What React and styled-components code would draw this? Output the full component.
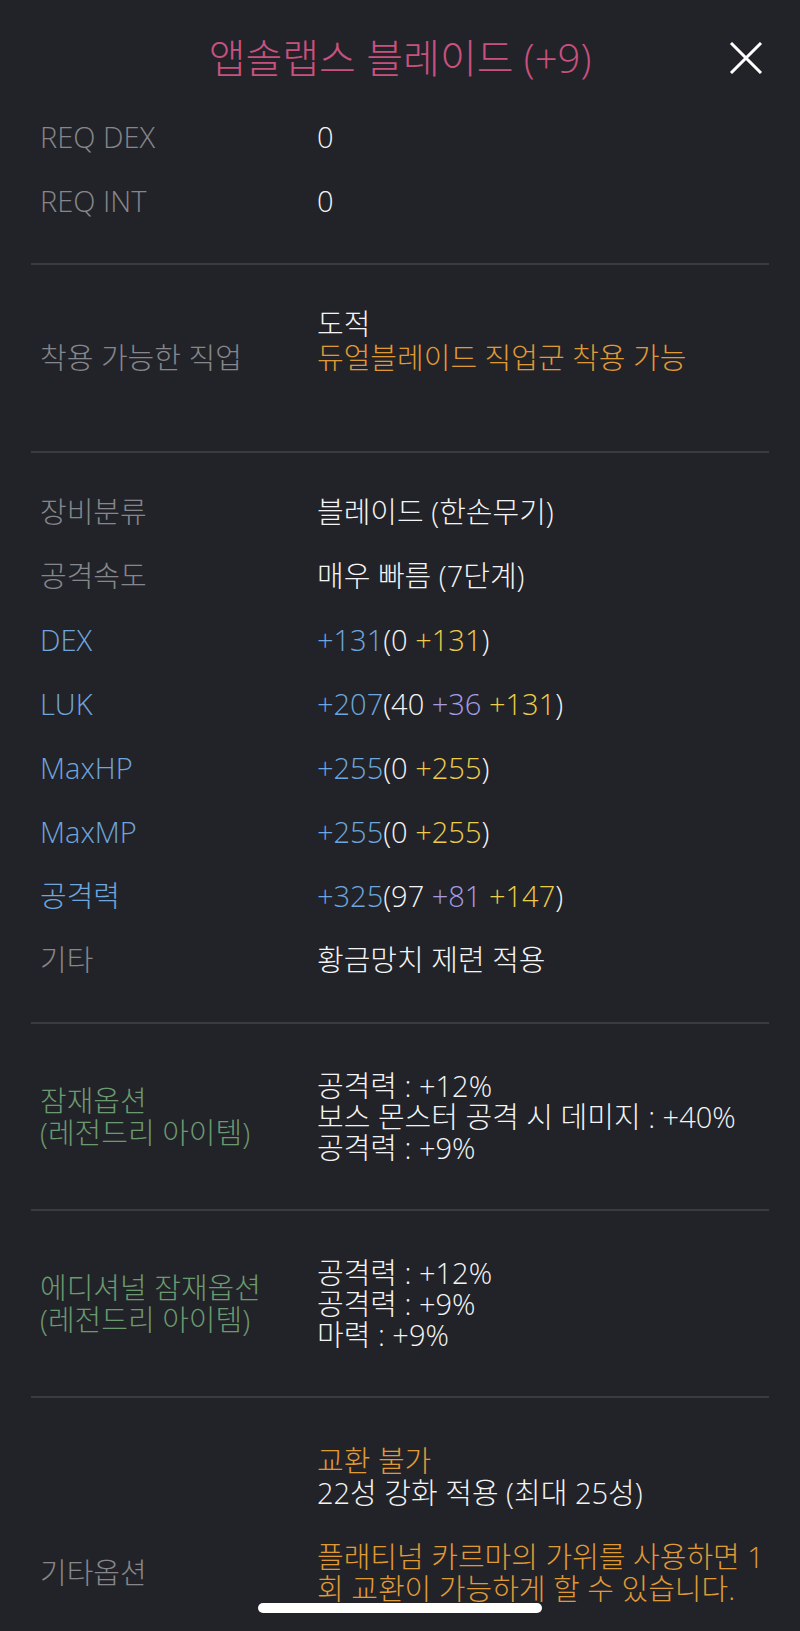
import React from 'react';
import styled, { createGlobalStyle } from 'styled-components';

const FONT =
  '"Open Sans", "Noto Sans CJK KR Light", "Noto Sans CJK KR DemiLight", "Noto Sans CJK KR", "Noto Sans", sans-serif';

const Global = createGlobalStyle`
  html, body { margin: 0; padding: 0; background: #222328; }
  body { font-family: ${FONT}; }
`;

const Page = styled.div`
  position: relative;
  width: 800px;
  height: 1631px;
  overflow: hidden;
  box-sizing: border-box;
  padding: 0 31px;
  background: #222328;
  color: #f4f4f4;
  font-family: ${FONT};
  font-weight: 300;
`;

const Header = styled.header`
  display: grid;
  grid-template-columns: 60px 1fr 60px;
  align-items: start;
  height: 105px;
  padding-top: 36px;
  box-sizing: border-box;
`;

const Title = styled.h1`
  grid-column: 2;
  margin: 0;
  text-align: center;
  font-size: 40px;
  line-height: 44px;
  font-weight: 300;
  color: #c9517f;
  white-space: nowrap;
`;

const Close = styled.button`
  grid-column: 3;
  justify-self: end;
  margin-right: 5px;
  width: 36px;
  height: 44px;
  padding: 0;
  border: 0;
  background: transparent;
  display: flex;
  align-items: center;
  justify-content: center;
`;

const Section = styled.section`
  padding: ${(p) => p.$pad};
  border-top: ${(p) => (p.$first ? 'none' : '2px solid #393a42')};
`;

const Row = styled.div`
  display: grid;
  grid-template-columns: 277px 1fr;
  align-items: center;
  min-height: ${(p) => p.$h || 'auto'};
  padding-left: 9px;
`;

const Label = styled.div`
  font-size: 29px;
  line-height: 32px;
  color: ${(p) => p.$color || '#86878c'};
  white-space: nowrap;
`;

const Value = styled.div`
  font-size: 29px;
  line-height: ${(p) => p.$lh || '32px'};
  color: #f4f4f4;
  white-space: nowrap;
`;

const Line = styled.div`
  white-space: nowrap;
  min-height: ${(p) => p.$lh || '32px'};
  color: ${(p) => p.$color || 'inherit'};
`;

const C = styled.span`
  color: ${(p) => p.$c};
`;

const HomeBar = styled.div`
  position: absolute;
  left: 258px;
  top: 1603px;
  width: 284px;
  height: 10px;
  border-radius: 5px;
  background: #ffffff;
`;

const BLUE = '#6ea6de';
const YELLOW = '#eccc4b';
const PURPLE = '#a59ce3';
const ORANGE = '#e09a35';
const GREEN = '#6b9a70';

const stats = [
  { k: '장비분류', v: '블레이드 (한손무기)' },
  { k: '공격속도', v: '매우 빠름 (7단계)' },
  { k: 'DEX', blue: true, total: '+131', parts: [['0', null], ['+131', YELLOW]] },
  { k: 'LUK', blue: true, total: '+207', parts: [['40', null], ['+36', PURPLE], ['+131', YELLOW]] },
  { k: 'MaxHP', blue: true, total: '+255', parts: [['0', null], ['+255', YELLOW]] },
  { k: 'MaxMP', blue: true, total: '+255', parts: [['0', null], ['+255', YELLOW]] },
  { k: '공격력', blue: true, total: '+325', parts: [['97', null], ['+81', PURPLE], ['+147', YELLOW]] },
  { k: '기타', v: '황금망치 제련 적용' },
];

function StatValue({ s }) {
  if (s.v) return <Value>{s.v}</Value>;
  return (
    <Value>
      <C $c={BLUE}>{s.total}</C>(
      {s.parts.map(([t, c], i) => (
        <React.Fragment key={i}>
          {i > 0 ? ' ' : ''}
          {c ? <C $c={c}>{t}</C> : t}
        </React.Fragment>
      ))}
      )
    </Value>
  );
}

export default function App() {
  return (
    <>
      <Global />
      <Page>
        <Header>
          <Title>앱솔랩스 블레이드 (+9)</Title>
          <Close aria-label="닫기">
            <svg width="34" height="32" viewBox="0 0 34 32">
              <path d="M2 1 L32 31 M32 1 L2 31" stroke="#ffffff" strokeWidth="3" fill="none" />
            </svg>
          </Close>
        </Header>

        <Section $first $pad="0 0 30px">
          <Row $h="64px">
            <Label>REQ DEX</Label>
            <Value>0</Value>
          </Row>
          <Row $h="64px">
            <Label>REQ INT</Label>
            <Value>0</Value>
          </Row>
        </Section>

        <Section $pad="42px 0 42px">
          <Row>
            <Label>착용 가능한 직업</Label>
            <Value $lh="34px">
              <Line $lh="34px">도적</Line>
              <Line $lh="34px" $color={ORANGE}>듀얼블레이드 직업군 착용 가능</Line>
              <Line $lh="34px" />
            </Value>
          </Row>
        </Section>

        <Section $pad="27px 0 30px">
          {stats.map((s) => (
            <Row key={s.k} $h="64px">
              <Label $color={s.blue ? BLUE : undefined}>{s.k}</Label>
              <StatValue s={s} />
            </Row>
          ))}
        </Section>

        <Section $pad="46px 0 46px">
          <Row>
            <Label $color={GREEN}>
              잠재옵션
              <br />
              (레전드리 아이템)
            </Label>
            <Value $lh="31px">
              <Line $lh="31px">공격력 : +12%</Line>
              <Line $lh="31px">보스 몬스터 공격 시 데미지 : +40%</Line>
              <Line $lh="31px">공격력 : +9%</Line>
            </Value>
          </Row>
        </Section>

        <Section $pad="46px 0 46px">
          <Row>
            <Label $color={GREEN}>
              에디셔널 잠재옵션
              <br />
              (레전드리 아이템)
            </Label>
            <Value $lh="31px">
              <Line $lh="31px">공격력 : +12%</Line>
              <Line $lh="31px">공격력 : +9%</Line>
              <Line $lh="31px">마력 : +9%</Line>
            </Value>
          </Row>
        </Section>

        <Section $pad="47px 0 0">
          <Row>
            <Label>기타옵션</Label>
            <Value>
              <Line $color={ORANGE}>교환 불가</Line>
              <Line>22성 강화 적용 (최대 25성)</Line>
              <Line />
              <Line $color={ORANGE}>플래티넘 카르마의 가위를 사용하면 1</Line>
              <Line $color={ORANGE}>회 교환이 가능하게 할 수 있습니다.</Line>
              <Line />
              <Line />
              <Line />
            </Value>
          </Row>
        </Section>

        <HomeBar />
      </Page>
    </>
  );
}
